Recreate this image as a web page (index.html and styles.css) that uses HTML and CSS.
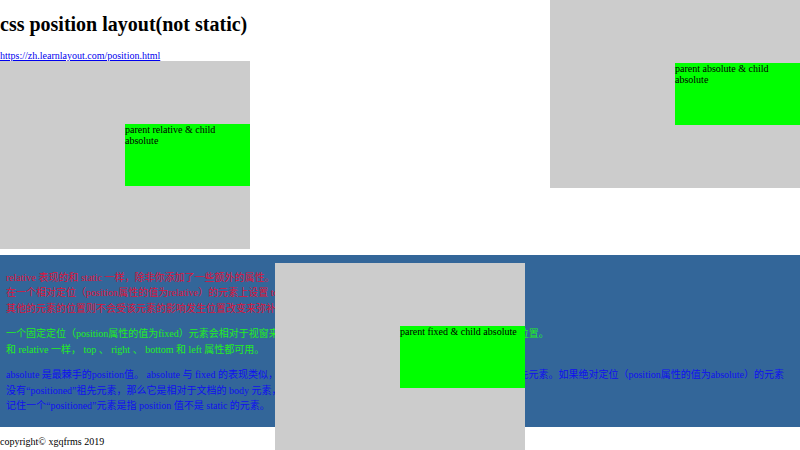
FILE: index.html
```html
<!DOCTYPE html>
<html lang="zh-CN">
<head>
<meta charset="utf-8">
<title>css position layout</title>
<link rel="stylesheet" href="styles.css">
</head>
<body>
<h1 class="title">css position layout(not static)</h1>
<a class="link" href="https://zh.learnlayout.com/position.html">https://zh.learnlayout.com/position.html</a>
<div class="box box-relative">
  <div class="child">parent relative &amp; child absolute</div>
</div>
<div class="box box-absolute">
  <div class="child">parent absolute &amp; child absolute</div>
</div>
<section class="notes">
  <p class="note note-red">relative 表现的和 static 一样，除非你添加了一些额外的属性。<br>在一个相对定位（position属性的值为relative）的元素上设置 top 、 right 、 bottom 和 left 属性会使其偏离其正常位置。<br>其他的元素的位置则不会受该元素的影响发生位置改变来弥补它偏离后剩下的空隙。</p>
  <p class="note note-green">一个固定定位（position属性的值为fixed）元素会相对于视窗来定位，这意味着即便页面滚动，它还是会停留在相同的位置。<br>和 relative 一样， top 、 right 、 bottom 和 left 属性都可用。</p>
  <p class="note note-blue">absolute 是最棘手的position值。 absolute 与 fixed 的表现类似，但是它不是相对于视窗而是相对于最近的“positioned”祖先元素。如果绝对定位（position属性的值为absolute）的元素没有“positioned”祖先元素，那么它是相对于文档的 body 元素，并且它会随着页面滚动而移动。<br>记住一个“positioned”元素是指 position 值不是 static 的元素。</p>
</section>
<div class="box box-fixed">
  <div class="child">parent fixed &amp; child absolute</div>
</div>
<footer class="footer">copyright© xgqfrms 2019</footer>
</body>
</html>
```

FILE: styles.css
```css
html, body {
  margin: 0;
  padding: 0;
  background: #fff;
}
body {
  font-family: "Liberation Serif", "Noto Sans CJK SC", serif;
  font-size: 10px;
  color: #000;
  position: relative;
  height: 450px;
  overflow: hidden;
}
.title {
  font-size: 20px;
  font-weight: bold;
  margin: 13.4px 0;
  line-height: 23px;
}
.link {
  display: block;
  color: #0000ee;
  line-height: 11.5px;
}
.box {
  width: 250px;
  height: 187.5px;
  background: #cccccc;
}
.box-relative {
  position: relative;
}
.box-absolute {
  position: absolute;
  top: 0;
  right: 0;
}
.box-fixed {
  position: fixed;
  top: 263px;
  left: 275px;
  z-index: 2;
}
.child {
  position: absolute;
  top: 62.5px;
  left: 125px;
  width: 125px;
  height: 62.5px;
  background: #00ff00;
  line-height: 11.5px;
}
.notes {
  margin-top: 6px;
  background: #336699;
  padding: 5px 6px 3px;
}
.note {
  margin: 10px 0;
  line-height: 15.5px;
}
.note-red { color: #dc143c; }
.note-green { color: #22ee22; }
.note-blue { color: #1010f0; }
.footer {
  padding-top: 9px;
  line-height: 11.5px;
}
```
